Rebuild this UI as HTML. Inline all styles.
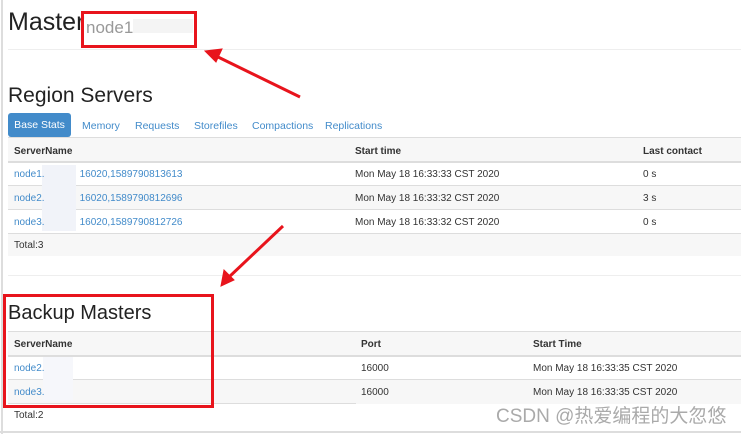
<!DOCTYPE html>
<html><head><style>
body{margin:0;width:741px;height:434px;background:#fff;font-family:"Liberation Sans",sans-serif;position:relative;overflow:hidden;color:#333}
.a{position:absolute;white-space:nowrap}
.s{font-size:10px}
.l{color:#428bca}
.row{position:absolute;left:8px;width:733px;border-top:1px solid #ddd}
</style></head><body>
<div class="a" style="left:1px;top:0;width:2px;height:434px;background:#ddd"></div>
<div class="a" style="left:0;top:431px;width:741px;height:2px;background:#ddd"></div>
<div class="a" style="left:8px;top:8px;font-size:25px;color:#222">Master</div>
<div class="a" style="left:86px;top:18px;font-size:17px;color:#999">node1<span style="display:inline-block;width:60px;height:14px;background:#f4f4f4"></span></div>
<div class="a" style="left:8px;top:49px;width:733px;height:1px;background:#eee"></div>
<div class="a" style="left:8px;top:84px;font-size:21px;color:#222">Region Servers</div>
<div class="a" style="left:8px;top:113px;width:63px;height:24px;background:#428bca;border-radius:3px;color:#fff;font-size:10.5px;line-height:24px;text-align:center">Base Stats</div>
<div class="a s l" style="left:82px;top:120px;font-size:10.5px">Memory</div>
<div class="a s l" style="left:135px;top:120px;font-size:10.5px">Requests</div>
<div class="a s l" style="left:194px;top:120px;font-size:10.5px">Storefiles</div>
<div class="a s l" style="left:252px;top:120px;font-size:10.5px">Compactions</div>
<div class="a s l" style="left:325px;top:120px;font-size:10.5px">Replications</div>
<div class="row" style="top:137px;height:24px;background:#f7f7f7"></div>
<div class="row" style="top:161px;height:24px;border-top:2px solid #ddd"></div>
<div class="row" style="top:185px;height:24px;background:#f7f7f7"></div>
<div class="row" style="top:209px;height:24px"></div>
<div class="row" style="top:233px;height:22px;background:#f7f7f7"></div>
<div class="a s" style="left:14px;top:146px;font-weight:bold">ServerName</div>
<div class="a s" style="left:355px;top:146px;font-weight:bold">Start time</div>
<div class="a s" style="left:643px;top:146px;font-weight:bold">Last contact</div>
<div class="a" style="left:42px;top:165px;width:34px;height:66px;background:#f1f3f9"></div>
<div class="a s l" style="left:14px;top:169px">node1.<span style="display:inline-block;width:35px"></span>16020,1589790813613</div>
<div class="a s l" style="left:14px;top:193px">node2.<span style="display:inline-block;width:35px"></span>16020,1589790812696</div>
<div class="a s l" style="left:14px;top:217px">node3.<span style="display:inline-block;width:35px"></span>16020,1589790812726</div>
<div class="a s" style="left:355px;top:169px">Mon May 18 16:33:33 CST 2020</div>
<div class="a s" style="left:355px;top:193px">Mon May 18 16:33:32 CST 2020</div>
<div class="a s" style="left:355px;top:217px">Mon May 18 16:33:32 CST 2020</div>
<div class="a s" style="left:643px;top:169px">0 s</div>
<div class="a s" style="left:643px;top:193px">3 s</div>
<div class="a s" style="left:643px;top:217px">0 s</div>
<div class="a s" style="left:14px;top:240px">Total:3</div>
<div class="a" style="left:8px;top:275px;width:733px;height:1px;background:#eee"></div>
<div class="a" style="left:8px;top:302px;font-size:20px;color:#222">Backup Masters</div>
<div class="row" style="top:331px;height:24px;background:#f7f7f7"></div>
<div class="row" style="top:355px;height:24px;border-top:2px solid #ddd"></div>
<div class="row" style="top:379px;height:24px;background:#f7f7f7"></div>
<div class="row" style="top:403px;width:348px;height:22px"></div>
<div class="a s" style="left:14px;top:339px;font-weight:bold">ServerName</div>
<div class="a s" style="left:361px;top:339px;font-weight:bold">Port</div>
<div class="a s" style="left:533px;top:339px;font-weight:bold">Start Time</div>
<div class="a" style="left:43px;top:357px;width:30px;height:44px;background:#f6f7fb"></div>
<div class="a s l" style="left:14px;top:363px">node2.</div>
<div class="a s l" style="left:14px;top:387px">node3.</div>
<div class="a s" style="left:361px;top:363px">16000</div>
<div class="a s" style="left:361px;top:387px">16000</div>
<div class="a s" style="left:533px;top:363px">Mon May 18 16:33:35 CST 2020</div>
<div class="a s" style="left:533px;top:387px">Mon May 18 16:33:35 CST 2020</div>
<div class="a s" style="left:14px;top:410px">Total:2</div>
<div class="a" style="left:496px;top:401px;font-size:19px;color:#aaa;font-family:'Liberation Sans','Noto Sans CJK SC',sans-serif">CSDN @热爱编程的大忽悠</div>
<div class="a" style="left:81px;top:11px;width:110px;height:31px;border:3px solid #e8141c"></div>
<div class="a" style="left:3px;top:294px;width:205px;height:108px;border:3px solid #e8141c"></div>
<svg class="a" style="left:0;top:0" width="741" height="434">
<g stroke="#e8141c" stroke-width="3" fill="#e8141c">
<line x1="300" y1="97" x2="216" y2="56"/>
<polygon points="205,51 222,49 216,62" stroke-width="1"/>
<line x1="283" y1="226" x2="228" y2="278"/>
<polygon points="221,286 224,270 234,280" stroke-width="1"/>
</g></svg>
</body></html>
